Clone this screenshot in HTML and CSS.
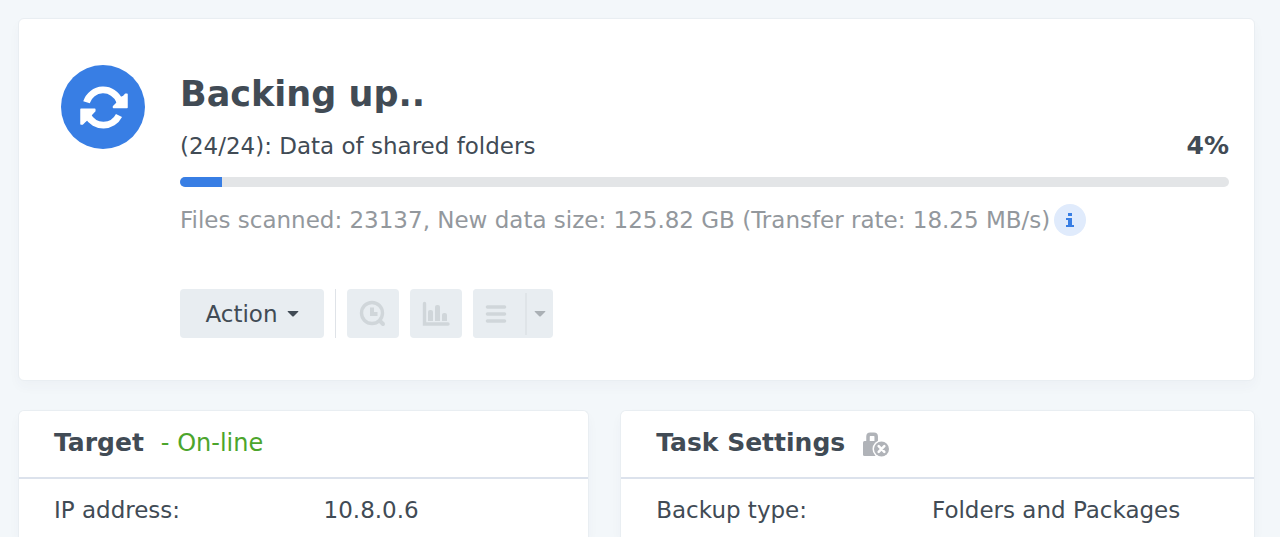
FILE: index.html
```html
<!DOCTYPE html>
<html lang="en">
<head>
<meta charset="utf-8">
<meta name="viewport" content="width=device-width, initial-scale=1">
<title>Backup task</title>
<link rel="stylesheet" href="styles.css">
</head>
<body>
<main class="page">
  <section class="card status">
    <svg class="status-icon" viewBox="0 0 84 84" aria-hidden="true">
      <circle cx="42" cy="42" r="42" fill="#387ee4"/>
      <g fill="none" stroke="#fff" stroke-width="6.8">
        <path d="M25.500 37.300A17.500 17.500 0 0 1 58.500 36"/>
        <path d="M58 50.500A17.500 17.500 0 0 1 27 51"/>
      </g>
      <path fill="#fff" stroke="#fff" stroke-width="1.500" stroke-linejoin="round" d="M66 29.200V42.500H52.500V41.500L55.500 38.500L58 33.500L62.500 31.500L64.500 29.200Z"/>
      <path fill="#fff" stroke="#fff" stroke-width="1.500" stroke-linejoin="round" d="M20 44.200H33.800V46L30 50L27.500 53.500L23.500 57L21.500 59H20Z"/>
    </svg>
    <div class="status-body">
      <h1 class="status-title">Backing up..</h1>
      <div class="status-line">
        <span id="step">(24/24): Data of shared folders</span>
        <strong class="percent">4%</strong>
      </div>
      <div class="progress" role="progressbar" aria-labelledby="step" aria-valuemin="0" aria-valuemax="100" aria-valuenow="4">
        <div class="progress-fill" style="width: 4%"></div>
      </div>
      <div class="detail">
        <span>Files scanned: 23137, New data size: 125.82 GB (Transfer rate: 18.25 MB/s)</span>
        <button class="info" type="button" aria-label="More information">
          <svg width="10" height="16" viewBox="0 0 10 16" aria-hidden="true"><path fill="#387ee4" d="M3 1H7V4H3ZM1 6H7V13H9V15H1V13H3V8H1Z"/></svg>
        </button>
      </div>
      <div class="toolbar">
        <button class="btn btn-action" type="button">Action
          <svg width="12" height="6" viewBox="0 0 12 6" aria-hidden="true"><path fill="#414b55" d="M1 0H11Q12 0 11 1L7 5Q6 6 5 5L1 1Q0 0 1 0Z"/></svg>
        </button>
        <span class="divider"></span>
        <button class="btn btn-icon" type="button" aria-label="Version explorer" disabled>
          <svg width="28" height="28" viewBox="0 0 28 28" aria-hidden="true" fill="none" stroke="#d0d6da">
            <circle cx="13" cy="13" r="10.500" stroke-width="3.400"/>
            <path stroke-width="4" stroke-linecap="round" d="M21 21L24 24"/>
            <path stroke-width="4" d="M13 7.500V14H18.500"/>
          </svg>
        </button>
        <button class="btn btn-icon" type="button" aria-label="Statistics" disabled>
          <svg width="28" height="28" viewBox="0 0 28 28" aria-hidden="true" fill="none" stroke="#d0d6da" stroke-linecap="round">
            <path stroke-width="3.400" d="M2.500 3.500V24H26"/>
            <path fill="#d0d6da" stroke="none" d="M6 21V12Q6 10 8 10H9Q11 10 11 12V21ZM13 21V7Q13 5 15 5H16Q18 5 18 7V21ZM20 21V15Q20 13 22 13H23Q25 13 25 15V21Z"/>
          </svg>
        </button>
        <div class="split">
          <button class="btn split-main" type="button" aria-label="Log" disabled>
            <svg width="22" height="20" viewBox="0 0 22 20" aria-hidden="true" stroke="#d0d6da" stroke-width="3.600" stroke-linecap="round"><path d="M2.500 3H19.500M2.500 10H19.500M2.500 17H19.500"/></svg>
          </button>
          <button class="btn split-menu" type="button" aria-label="Log options" disabled>
            <svg width="12" height="6" viewBox="0 0 12 6" aria-hidden="true"><path fill="#aab0b5" d="M1 0H11Q12 0 11 1L7 5Q6 6 5 5L1 1Q0 0 1 0Z"/></svg>
          </button>
        </div>
      </div>
    </div>
  </section>
  <div class="panels">
    <section class="card panel">
      <header class="panel-head">
        <h2 class="panel-title">Target</h2>
        <span class="online">- On-line</span>
      </header>
      <dl class="facts">
        <dt>IP address:</dt>
        <dd>10.8.0.6</dd>
      </dl>
    </section>
    <section class="card panel">
      <header class="panel-head">
        <h2 class="panel-title">Task Settings</h2>
        <svg class="lock" width="28" height="26" viewBox="0 0 28 26" role="img" aria-label="Not encrypted">
          <path fill="none" stroke="#b0b3b8" stroke-width="3.500" d="M6 10V4.500Q6 2.300 8.200 2.300H12Q14.200 2.300 14.200 4.500V10"/>
          <rect x="1" y="9" width="17" height="15" rx="1.500" fill="#b0b3b8"/>
          <circle cx="19.500" cy="17" r="9" fill="#fff"/>
          <circle cx="19.500" cy="17" r="7.500" fill="#b0b3b8"/>
          <path stroke="#fff" stroke-width="2.600" stroke-linecap="round" d="M16.700 14.200L22.300 19.800M22.300 14.200L16.700 19.800"/>
        </svg>
      </header>
      <dl class="facts">
        <dt>Backup type:</dt>
        <dd>Folders and Packages</dd>
      </dl>
    </section>
  </div>
</main>
</body>
</html>
```
FILE: styles.css
```css
* { box-sizing: border-box; }

body {
  margin: 0;
  background: #f3f7fa;
  color: #414b55;
  font: 23px/32px Verdana, "DejaVu Sans", sans-serif;
}

h1, h2, dl, dd { margin: 0; }

button {
  padding: 0;
  border: 0;
  color: inherit;
  font: inherit;
}

.page {
  display: flex;
  flex-direction: column;
  gap: 29px;
  height: 100vh;
  padding: 18px 25px 0 18px;
  overflow: hidden;
}

.card {
  background: #fff;
  border: 1px solid #e9eef2;
  border-radius: 6px;
  box-shadow: 0 6px 12px rgba(65, 75, 85, 0.03);
}

.status {
  display: flex;
  flex-shrink: 0;
  gap: 35px;
  padding: 46px 25px 42px 42px;
}

.status-icon {
  flex: none;
  width: 84px;
  height: 84px;
}

.status-body {
  flex: 1;
  min-width: 0;
}

.status-title {
  padding-top: 6px;
  font-size: 35px;
  line-height: 46px;
}

.status-line {
  display: flex;
  justify-content: space-between;
  padding-top: 13px;
}

.percent { font-size: 25px; }

.progress {
  height: 10px;
  margin: 15px 0 17px;
  overflow: hidden;
  background: #e3e5e7;
  border-radius: 5px;
}

.progress-fill {
  height: 100%;
  background: #387ee4;
}

.detail {
  display: flex;
  align-items: center;
  gap: 4px;
  color: #93989d;
}

.info {
  display: grid;
  place-items: center;
  flex: none;
  width: 32px;
  height: 32px;
  background: #e0ebfc;
  border-radius: 50%;
}

.toolbar {
  display: flex;
  gap: 11px;
  padding-top: 53px;
}

.btn {
  display: flex;
  align-items: center;
  justify-content: center;
  height: 49px;
  background: #e8edf1;
  border-radius: 4px;
}

.btn-action {
  gap: 9px;
  width: 144px;
}

.btn-icon { width: 52px; }

.divider {
  width: 1px;
  background: #dfe3e8;
}

.split {
  display: flex;
  align-items: center;
  background: #e8edf1;
  border-radius: 4px;
}

.split-main { width: 52px; padding-right: 6px; }

.split-menu {
  width: 28px;
  height: 42px;
  border-left: 2px solid #dfe4e8;
  border-radius: 0;
}

.panels {
  display: grid;
  flex: 1;
  grid-template-columns: 9fr 10fr;
  gap: 31px;
}

.panel {
  border-bottom: 0;
  border-radius: 6px 6px 0 0;
}

.panel-head {
  display: flex;
  align-items: center;
  gap: 17px;
  height: 68px;
  padding: 0 35px 2px;
  border-bottom: 2px solid #dce2ec;
}

.panel-title {
  font-size: 25px;
  line-height: 32px;
}

.lock { margin-top: 4px; }

.online {
  color: #4ca52c;
  font-size: 24px;
}

.facts {
  display: grid;
  grid-template-columns: 54% 1fr;
  padding: 15px 35px 0;
}

.panel + .panel .facts { grid-template-columns: 49% 1fr; }
```
